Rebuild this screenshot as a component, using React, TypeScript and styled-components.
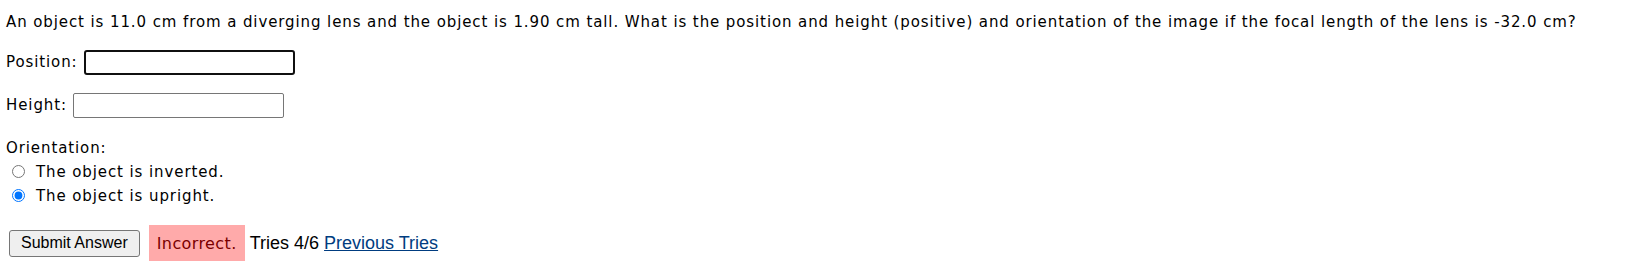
import styled, { createGlobalStyle } from 'styled-components';

const GlobalStyle = createGlobalStyle`
  body {
    margin: 0;
    background: #ffffff;
    color: #000000;
    font-family: "DejaVu Sans", Verdana, sans-serif;
    font-size: 15px;
    letter-spacing: 0.9px;
  }
`;

const Page = styled.div`
  padding: 10px 6px 0 6px;
`;

const Question = styled.p`
  margin: 0;
  line-height: 24px;
  white-space: nowrap;
`;

const FieldRow = styled.div<{ $top: number }>`
  display: flex;
  align-items: center;
  gap: 6px;
  margin-top: ${(p) => p.$top}px;
  height: 25px;
`;

const Label = styled.label`
  line-height: 25px;
`;

const TextInput = styled.input<{ $focused?: boolean }>`
  box-sizing: border-box;
  width: 211px;
  height: 25px;
  margin: 0;
  padding: 1px 2px;
  font: inherit;
  background: #ffffff;
  border: ${(p) => (p.$focused ? '2px solid #101010' : '1px solid #767676')};
  border-radius: ${(p) => (p.$focused ? 3 : 2)}px;
  outline: none;
`;

const Orientation = styled.fieldset`
  border: 0;
  margin: 18px 0 0 0;
  padding: 0;
`;

const Legend = styled.div`
  line-height: 24px;
`;

const Choice = styled.label`
  display: flex;
  align-items: center;
  height: 24px;
  padding-left: 6px;
  gap: 11px;
`;

const Radio = styled.input`
  width: 13px;
  height: 13px;
  margin: 0 0 2px 0;
  accent-color: #0075ff;
`;

const ActionRow = styled.div`
  display: flex;
  align-items: center;
  margin-top: 17px;
  padding-left: 3px;
  letter-spacing: normal;
`;

const SubmitButton = styled.button`
  box-sizing: border-box;
  height: 27px;
  padding: 0 11px;
  font-family: "Liberation Sans", Arial, sans-serif;
  font-size: 16px;
  color: #000000;
  background: #efefef;
  border: 1px solid #767676;
  border-radius: 3px;
`;

const Verdict = styled.span`
  display: inline-flex;
  align-items: center;
  height: 36px;
  margin-left: 9px;
  padding: 0 8px;
  background: #ffaaaa;
  color: #7a0000;
  font-size: 16px;
  letter-spacing: 0.4px;
`;

const Tries = styled.span`
  margin-left: 5px;
  font-family: "Liberation Sans", Arial, sans-serif;
  font-size: 18px;
`;

const Link = styled.a`
  color: #003c80;
  text-decoration: underline;
`;

export default function App() {
  return (
    <>
      <GlobalStyle />
      <Page>
        <Question>
          An object is 11.0 cm from a diverging lens and the object is 1.90 cm tall. What is the position and
          height (positive) and orientation of the image if the focal length of the lens is -32.0 cm?
        </Question>
        <FieldRow $top={16}>
          <Label htmlFor="pos">Position:</Label>
          <TextInput id="pos" type="text" $focused />
        </FieldRow>
        <FieldRow $top={18}>
          <Label htmlFor="hgt">Height:</Label>
          <TextInput id="hgt" type="text" />
        </FieldRow>
        <Orientation>
          <Legend>Orientation:</Legend>
          <Choice>
            <Radio type="radio" name="orient" />
            The object is inverted.
          </Choice>
          <Choice>
            <Radio type="radio" name="orient" defaultChecked />
            The object is upright.
          </Choice>
        </Orientation>
        <ActionRow>
          <SubmitButton type="button">Submit Answer</SubmitButton>
          <Verdict>Incorrect.</Verdict>
          <Tries>
            Tries 4/6 <Link href="#">Previous Tries</Link>
          </Tries>
        </ActionRow>
      </Page>
    </>
  );
}
